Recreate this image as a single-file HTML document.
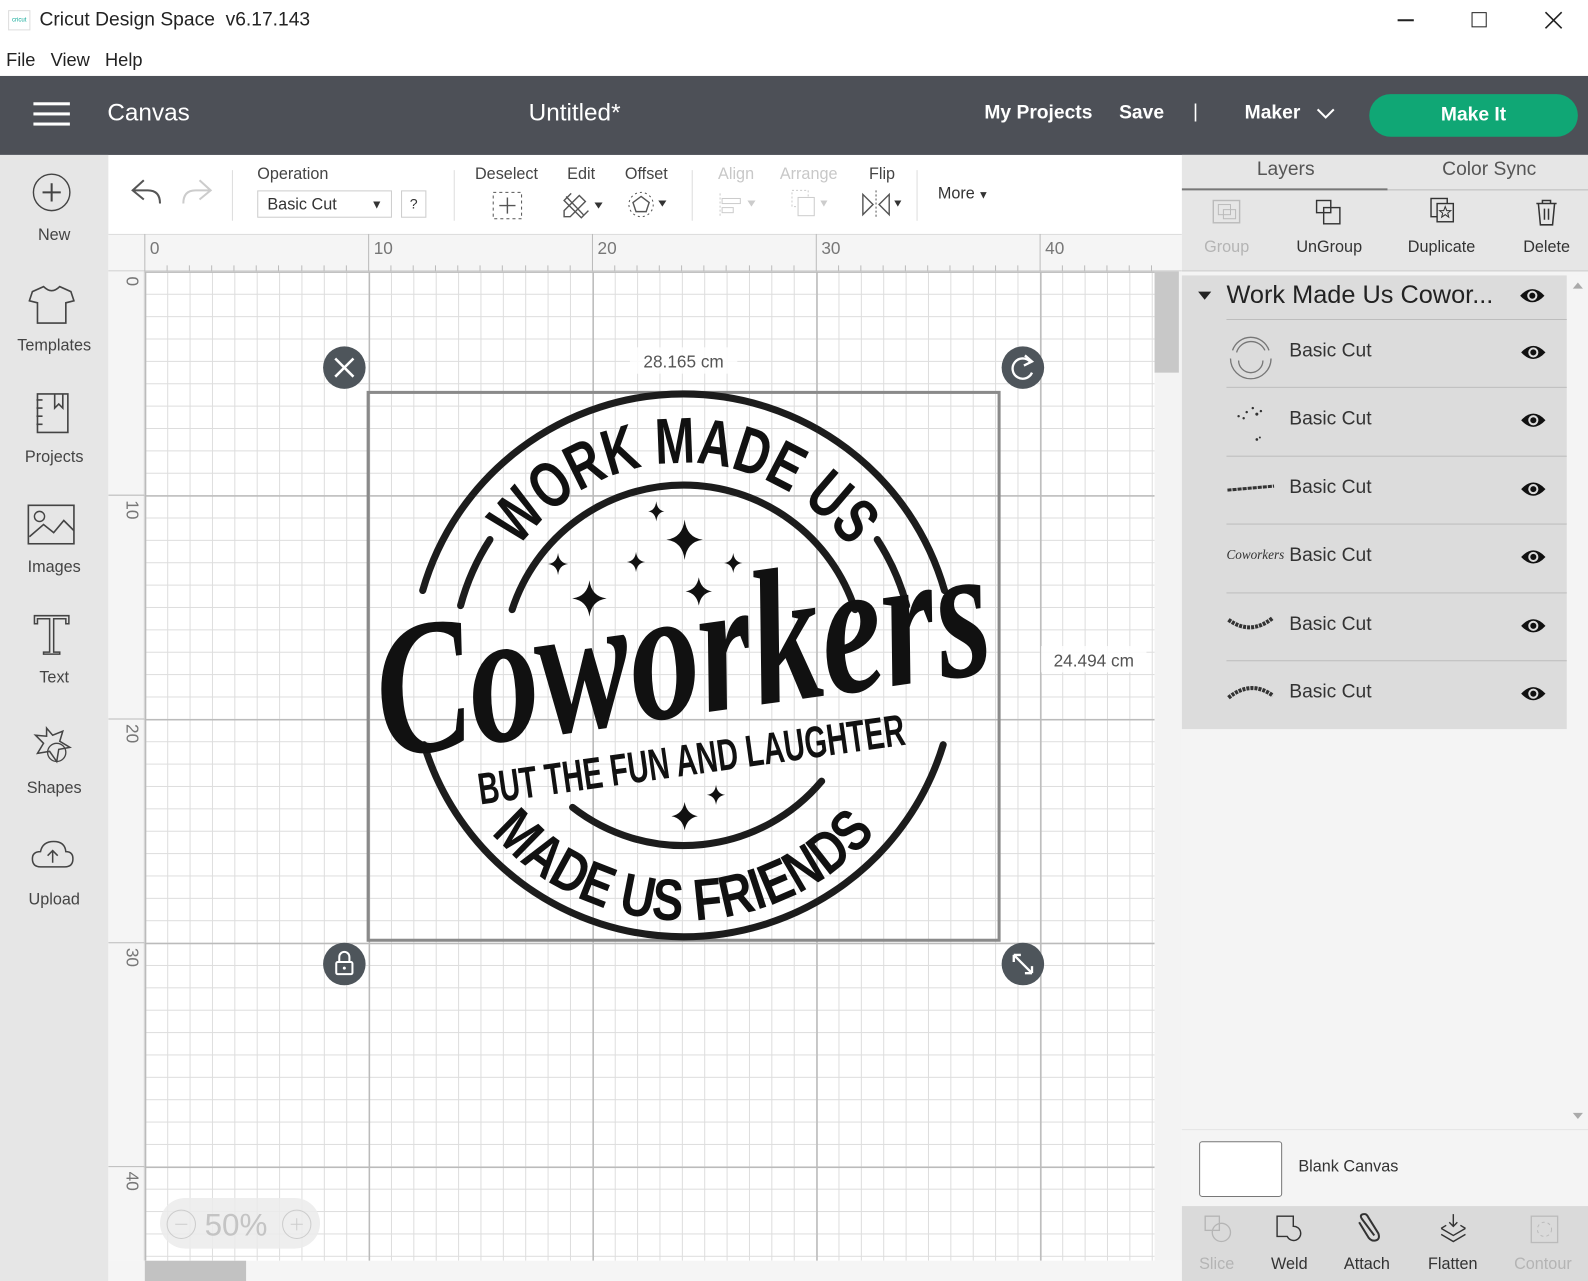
<!DOCTYPE html>
<html><head><meta charset="utf-8"><style>
*{margin:0;padding:0;box-sizing:border-box}
html,body{width:1588px;height:1281px;overflow:hidden;background:#fff}
#root{position:absolute;left:0;top:0;width:1568px;height:1265px;transform:scale(1.01276,1.01265);transform-origin:0 0;font-family:"Liberation Sans",sans-serif;color:#333}
.a{position:absolute}
.t{position:absolute;white-space:nowrap}
.side .lbl{position:absolute;width:107px;text-align:center;font-size:16px;color:#444;left:0}
.tb{font-size:16px;color:#444}
.rl{font-size:16px;color:#333}
.row{position:absolute;left:1211px;width:336px;height:67px;border-top:1px solid #bdbdbd}
.row span{position:absolute;left:62px;top:20px;font-size:19px;color:#333}
.eye{position:absolute;left:290px;top:22px}
</style></head><body><div id="root">

<div class="a" style="left:8px;top:10px;width:22px;height:20px;border:1px solid #ddd;font-size:6px;color:#1a9;text-align:center;line-height:18px">cricut</div>
<div class="t" style="left:39px;top:9px;font-size:19px;color:#222">Cricut Design Space&nbsp; v6.17.143</div>
<div class="a" style="left:1380px;top:19px;width:16px;height:1.5px;background:#222"></div>
<div class="a" style="left:1453px;top:12px;width:15px;height:15px;border:1.5px solid #222"></div>
<svg class="a" style="left:1525px;top:11px" width="18" height="18"><path d="M1 1L17 17M17 1L1 17" stroke="#222" stroke-width="1.6"/></svg>
<div class="t" style="left:6px;top:49px;font-size:18px;color:#222">File&nbsp;&nbsp; View&nbsp;&nbsp; Help</div>

<div class="a" style="left:0;top:75px;width:1568px;height:78px;background:#4d5057"></div>
<div class="a" style="left:33px;top:101px;width:36px;height:3px;background:#fff"></div>
<div class="a" style="left:33px;top:111px;width:36px;height:3px;background:#fff"></div>
<div class="a" style="left:33px;top:121px;width:36px;height:3px;background:#fff"></div>
<div class="t" style="left:106px;top:98px;font-size:24px;color:#fff">Canvas</div>
<div class="t" style="left:522px;top:98px;font-size:24px;color:#fff">Untitled*</div>
<div class="t" style="left:972px;top:101px;font-size:19px;color:#fff;font-weight:bold">My Projects</div>
<div class="t" style="left:1105px;top:101px;font-size:19px;color:#fff;font-weight:bold">Save</div>
<div class="t" style="left:1178px;top:100px;font-size:19px;color:#fff">|</div>
<div class="t" style="left:1229px;top:101px;font-size:19px;color:#fff;font-weight:bold">Maker</div>
<svg class="a" style="left:1299px;top:106px" width="20" height="12"><path d="M2 2L10 10L18 2" stroke="#fff" stroke-width="2" fill="none"/></svg>
<div class="a" style="left:1352px;top:93px;width:206px;height:42px;border-radius:21px;background:#10a775;color:#fff;font-size:19px;font-weight:bold;text-align:center;line-height:42px">Make It</div>

<div class="a side" style="left:0;top:153px;width:107px;height:1112px;background:#e6e6e6">
<svg class="a" style="left:32px;top:18px" width="38" height="38"><circle cx="19" cy="19" r="18" fill="none" stroke="#444" stroke-width="1.4"/><path d="M19 10V28M10 19H28" stroke="#444" stroke-width="2"/></svg>
<div class="lbl" style="top:71px">New</div>
<svg class="a" style="left:28px;top:128px" width="46" height="40"><path d="M15 2L4 7L1 16L9 18V38H37V18L45 16L42 7L31 2Q23 10 15 2Z" fill="none" stroke="#444" stroke-width="1.6"/></svg>
<div class="lbl" style="top:180px">Templates</div>
<svg class="a" style="left:32px;top:234px" width="40" height="42"><path d="M5 2H35V40H5Z M4 8H10M4 16H10M4 24H10M4 32H10M22 2V16L26 12L30 16V2" fill="none" stroke="#444" stroke-width="1.6"/></svg>
<div class="lbl" style="top:290px">Projects</div>
<svg class="a" style="left:27px;top:345px" width="48" height="40"><rect x="1" y="1" width="45" height="38" fill="none" stroke="#444" stroke-width="1.6"/><circle cx="12" cy="12" r="5" fill="none" stroke="#444" stroke-width="1.4"/><path d="M2 32L16 20L26 28L36 16L46 26" fill="none" stroke="#444" stroke-width="1.6"/></svg>
<div class="lbl" style="top:399px">Images</div>
<svg class="a" style="left:32px;top:453px" width="38" height="42"><path d="M2 2H36V10H33V5H21V38H27V40H11V38H17V5H5V10H2Z" fill="none" stroke="#444" stroke-width="1.5"/></svg>
<div class="lbl" style="top:508px">Text</div>
<svg class="a" style="left:32px;top:563px" width="40" height="40"><path d="M14 3L20 10L30 6L27 16L37 22L26 24L24 36L17 26L5 28L11 18L3 10L14 11Z" fill="none" stroke="#444" stroke-width="1.5"/><circle cx="24" cy="27" r="9" fill="none" stroke="#444" stroke-width="1.3"/></svg>
<div class="lbl" style="top:617px">Shapes</div>
<svg class="a" style="left:30px;top:675px" width="44" height="32"><path d="M10 28Q2 28 2 20Q2 13 10 13Q12 3 23 3Q34 3 35 13Q42 13 42 20Q42 28 34 28Z" fill="none" stroke="#444" stroke-width="1.5"/><path d="M22 24V12M17 17L22 12L27 17" fill="none" stroke="#444" stroke-width="1.5"/></svg>
<div class="lbl" style="top:727px">Upload</div>
</div>

<svg class="a" style="left:128px;top:175px" width="34" height="28"><path d="M14 3L3 13L14 22M3 13H18Q30 13 30 26" fill="none" stroke="#555" stroke-width="2"/></svg>
<svg class="a" style="left:177px;top:175px" width="34" height="28"><path d="M20 3L31 13L20 22M31 13H16Q4 13 4 26" fill="none" stroke="#ccc" stroke-width="2"/></svg>
<div class="a" style="left:229px;top:168px;width:1px;height:50px;background:#ddd"></div>
<div class="t tb" style="left:254px;top:164px">Operation</div>
<div class="a" style="left:254px;top:188px;width:133px;height:27px;border:1px solid #ccc;font-size:16px;color:#333;padding:5px 0 0 9px">Basic Cut<span style="position:absolute;right:8px;top:6px;font-size:12px">▼</span></div>
<div class="a" style="left:396px;top:188px;width:25px;height:27px;border:1px solid #ccc;font-size:14px;text-align:center;line-height:25px">?</div>
<div class="a" style="left:448px;top:168px;width:1px;height:50px;background:#ddd"></div>
<div class="t tb" style="left:469px;top:164px">Deselect</div>
<svg class="a" style="left:486px;top:189px" width="30" height="28"><rect x="1" y="1" width="28" height="26" fill="none" stroke="#555" stroke-dasharray="3 3"/><path d="M15 6V22M7 14H23" stroke="#555" stroke-width="1.4"/></svg>
<div class="t tb" style="left:560px;top:164px">Edit</div>
<svg class="a" style="left:554px;top:188px" width="44" height="28"><path d="M3 20L18 5L24 11L9 26H3Z M5 6L22 24M10 3L3 10L20 27L27 20" fill="none" stroke="#555" stroke-width="1.4"/><path d="M33 12L41 12L37 18Z" fill="#333"/></svg>
<div class="t tb" style="left:617px;top:164px">Offset</div>
<svg class="a" style="left:619px;top:188px" width="42" height="28"><path d="M14 6L22 12L19 21H9L6 12Z" fill="none" stroke="#555" stroke-width="1.4"/><circle cx="14" cy="14" r="12" fill="none" stroke="#555" stroke-dasharray="2 3"/><path d="M31 10L39 10L35 16Z" fill="#333"/></svg>
<div class="a" style="left:683px;top:168px;width:1px;height:50px;background:#ddd"></div>
<div class="t tb" style="left:709px;top:164px;color:#c8c8c8">Align</div>
<svg class="a" style="left:708px;top:188px" width="42" height="28"><path d="M3 3V26" stroke="#ccc" stroke-dasharray="2 2"/><rect x="5" y="8" width="18" height="5" fill="none" stroke="#ccc"/><rect x="5" y="17" width="11" height="5" fill="none" stroke="#ccc"/><path d="M30 10L38 10L34 16Z" fill="#ccc"/></svg>
<div class="t tb" style="left:770px;top:164px;color:#c8c8c8">Arrange</div>
<svg class="a" style="left:779px;top:185px" width="42" height="32"><rect x="3" y="3" width="16" height="16" fill="none" stroke="#ccc" stroke-dasharray="2 2"/><rect x="9" y="10" width="16" height="18" fill="#fff" stroke="#ccc"/><path d="M31 13L38 13L34.5 19Z" fill="#ccc"/></svg>
<div class="t tb" style="left:858px;top:164px">Flip</div>
<svg class="a" style="left:849px;top:186px" width="44" height="32"><path d="M3 6V26L13 16Z M29 6V26L19 16Z" fill="none" stroke="#555" stroke-width="1.4"/><path d="M16 2V30" stroke="#555" stroke-dasharray="2 2"/><path d="M34 12L41 12L37.5 18Z" fill="#333"/></svg>
<div class="a" style="left:905px;top:168px;width:1px;height:50px;background:#ddd"></div>
<div class="t tb" style="left:926px;top:183px;color:#333">More<span style="font-size:11px"> ▼</span></div>

<div class="a" style="left:107px;top:231px;width:1060px;height:37px;background:#f5f5f5;border-top:1px solid #ddd;border-bottom:1px solid #ccc"></div>
<div class="a" style="left:107px;top:268px;width:36px;height:977px;background:#f5f5f5;border-right:1px solid #ccc"></div>
<svg class="a" style="left:107px;top:231px" width="1040" height="1014">
<g stroke="#bbb" stroke-width="1">
<path d="M36 37V0M257 37V0M478 37V0M699 37V0M920 37V0"/>
<path d="M58 37v-6M80 37v-6M102 37v-6M124 37v-6M146 37v-6M168 37v-6M191 37v-6M213 37v-6M235 37v-6M279 37v-6M301 37v-6M323 37v-6M345 37v-6M367 37v-6M389 37v-6M412 37v-6M434 37v-6M456 37v-6M500 37v-6M522 37v-6M544 37v-6M566 37v-6M588 37v-6M610 37v-6M633 37v-6M655 37v-6M677 37v-6M721 37v-6M743 37v-6M765 37v-6M787 37v-6M809 37v-6M831 37v-6M854 37v-6M876 37v-6M898 37v-6M942 37v-6M964 37v-6M986 37v-6M1008 37v-6M1030 37v-6"/>
<path d="M0 258H36M0 479H36M0 700H36M0 921H36"/>
</g>
<g fill="#777" font-size="17" font-family="Liberation Sans">
<text x="41" y="20">0</text><text x="262" y="20">10</text><text x="483" y="20">20</text><text x="704" y="20">30</text><text x="925" y="20">40</text>
<text transform="translate(18,42) rotate(90)">0</text>
<text transform="translate(18,263) rotate(90)">10</text>
<text transform="translate(18,484) rotate(90)">20</text>
<text transform="translate(18,705) rotate(90)">30</text>
<text transform="translate(18,926) rotate(90)">40</text>
</g>
</svg>

<div class="a" style="left:143px;top:268px;width:997px;height:977px;background-color:#fff;
background-image:linear-gradient(90deg,#bbb 1.5px,transparent 1.5px),linear-gradient(180deg,#bbb 1.5px,transparent 1.5px),linear-gradient(90deg,#ddd 1px,transparent 1px),linear-gradient(180deg,#ddd 1px,transparent 1px);
background-size:221px 221px,221px 221px,22.1px 22.1px,22.1px 22.1px;background-position:0 0,0 0,0 0,0 0"></div>
<div class="a" style="left:1140px;top:268px;width:27px;height:977px;background:#f3f3f3"></div>
<div class="a" style="left:1140px;top:268px;width:24px;height:100px;background:#c8c8c8"></div>
<div class="a" style="left:107px;top:1245px;width:1060px;height:20px;background:#f5f5f5"></div>
<div class="a" style="left:143px;top:1245px;width:100px;height:20px;background:#c2c2c2"></div>

<div class="a" style="left:158px;top:1183px;width:158px;height:50px;border-radius:25px;background:rgba(235,235,235,.85)"></div>
<svg class="a" style="left:163px;top:1193px" width="150" height="32"><circle cx="16" cy="16" r="14" fill="none" stroke="#ccc"/><path d="M10 16H22" stroke="#ccc"/><circle cx="130" cy="16" r="14" fill="none" stroke="#ccc"/><path d="M124 16H136M130 10V22" stroke="#ccc"/><text x="39" y="27" font-size="31" fill="#c4c4c4" font-family="Liberation Sans">50%</text></svg>

<svg class="a" style="left:0;top:0" width="1168" height="1265">
<rect x="363.5" y="387.5" width="623" height="541" fill="none" stroke="#8a8a8a" stroke-width="3"/>
<g fill="none" stroke="#1c1c1c" stroke-width="7" stroke-linecap="round">
<path d="M417.4 583.1A268 268 0 0 1 932.6 583.1"/>
<path d="M418.7 735.4A268 268 0 0 0 931.3 735.4"/>
<path d="M454.8 598A228 228 0 0 1 483.8 532.8"/>
<path d="M866.2 532.8A228 228 0 0 1 895.2 598"/>
<path d="M505.7 602A178 178 0 0 1 844.3 602"/>
<path d="M565.4 797.3A178 178 0 0 0 811.3 771.4"/>
</g>
<defs>
<path id="tp" d="M487.1 588.6A200 200 0 0 1 862.9 588.6"/>
<path id="bp" d="M438.2 743.2A252 252 0 0 0 911.8 743.2"/>
</defs>
<g fill="#111" font-family="Liberation Sans Narrow,Liberation Sans,sans-serif" font-weight="bold">
<text font-size="64" text-anchor="middle"><textPath href="#tp" startOffset="50%" textLength="380" lengthAdjust="spacingAndGlyphs">WORK MADE US</textPath></text>
<text font-size="58" text-anchor="middle"><textPath href="#bp" startOffset="50%" textLength="430" lengthAdjust="spacingAndGlyphs">MADE US FRIENDS</textPath></text>
<text x="683" y="765" font-size="44" text-anchor="middle" textLength="425" lengthAdjust="spacingAndGlyphs" transform="rotate(-8 683 752)">BUT THE FUN AND LAUGHTER</text>
</g>
<text x="675" y="706" font-family="Liberation Serif,serif" font-style="italic" font-weight="bold" font-size="190" fill="#111" text-anchor="middle" textLength="610" lengthAdjust="spacingAndGlyphs" transform="rotate(-8 675 655)">Coworkers</text>
<g fill="#111">
<path d="M648 495Q649 504 656 505Q649 506 648 515Q647 506 640 505Q647 504 648 495Z"/>
<path d="M676 513Q678 531 694 533Q678 535 676 553Q674 535 658 533Q674 531 676 513Z"/>
<path d="M551 546Q552 556 561 557Q552 558 551 568Q550 558 541 557Q550 556 551 546Z"/>
<path d="M628 545Q629 554 637 555Q629 556 628 565Q627 556 619 555Q627 554 628 545Z"/>
<path d="M724 546Q725 555 733 556Q725 557 724 566Q723 557 715 556Q723 555 724 546Z"/>
<path d="M690 570Q692 582 703 584Q692 586 690 598Q688 586 677 584Q688 582 690 570Z"/>
<path d="M582 573Q584 589 599 591Q584 593 582 609Q580 593 565 591Q580 589 582 573Z"/>
<path d="M707 775Q708 784 716 785Q708 786 707 795Q706 786 698 785Q706 784 707 775Z"/>
<path d="M676 792Q678 804 689 806Q678 808 676 820Q674 808 663 806Q674 804 676 792Z"/>
</g>
<rect x="622" y="343" width="106" height="26" fill="#fff" opacity=".85"/>
<text x="675" y="363" font-size="17" fill="#555" text-anchor="middle" font-family="Liberation Sans">28.165 cm</text>
<rect x="1028" y="638" width="104" height="26" fill="#fff" opacity=".85"/>
<text x="1080" y="658" font-size="17" fill="#555" text-anchor="middle" font-family="Liberation Sans">24.494 cm</text>
<g fill="#4e555b">
<circle cx="340" cy="363" r="21"/><circle cx="1010" cy="363" r="21"/><circle cx="340" cy="952" r="21"/><circle cx="1010" cy="952" r="21"/>
</g>
<path d="M331 354L349 372M349 354L331 372" stroke="#fff" stroke-width="2.5"/>
<path d="M1017 357A10 10 0 1 0 1019 368" fill="none" stroke="#fff" stroke-width="2.3"/><path d="M1012 351L1019 357L1011 361" fill="none" stroke="#fff" stroke-width="2.3"/>
<rect x="332" y="950" width="16" height="12" rx="1.5" fill="none" stroke="#fff" stroke-width="2"/><path d="M335 950V945A5 5 0 0 1 345 945V950" fill="none" stroke="#fff" stroke-width="2"/><circle cx="340" cy="956" r="1.5" fill="#fff"/>
<path d="M1001 943L1019 961M1001 943H1008M1001 943V950M1019 961H1012M1019 961V954" fill="none" stroke="#fff" stroke-width="2.3"/>
</svg>

<div class="a" style="left:1167px;top:153px;width:401px;height:1112px;background:#f4f4f4"></div>
<div class="a" style="left:1167px;top:153px;width:401px;height:115px;background:#e6e6e6;border-bottom:1px solid #ccc"></div>
<div class="t" style="left:1241px;top:157px;font-size:19px;color:#555">Layers</div>
<div class="t" style="left:1424px;top:157px;font-size:19px;color:#555">Color Sync</div>
<div class="a" style="left:1167px;top:186px;width:203px;height:2px;background:#777"></div>
<div class="a" style="left:1370px;top:187px;width:198px;height:1px;background:#bbb"></div>
<svg class="a" style="left:1196px;top:196px" width="32" height="28"><rect x="2" y="2" width="26" height="22" fill="none" stroke="#bbb" stroke-width="1.4"/><rect x="7" y="6" width="12" height="10" fill="none" stroke="#bbb"/><rect x="12" y="11" width="12" height="9" fill="none" stroke="#bbb"/></svg>
<div class="t rl" style="left:1189px;top:236px;color:#b4b4b4">Group</div>
<svg class="a" style="left:1298px;top:196px" width="30" height="30"><rect x="2" y="2" width="14" height="12" fill="none" stroke="#333" stroke-width="1.4"/><rect x="9" y="9" width="16" height="16" fill="none" stroke="#333" stroke-width="1.4"/></svg>
<div class="t rl" style="left:1280px;top:236px">UnGroup</div>
<svg class="a" style="left:1411px;top:194px" width="28" height="30"><rect x="2" y="2" width="16" height="18" fill="none" stroke="#333" stroke-width="1.4"/><rect x="8" y="7" width="16" height="18" fill="#e6e6e6" stroke="#333" stroke-width="1.4"/><path d="M16 10L17.5 14H21.5L18.5 16.5L19.5 20.5L16 18L12.5 20.5L13.5 16.5L10.5 14H14.5Z" fill="none" stroke="#333"/></svg>
<div class="t rl" style="left:1390px;top:236px">Duplicate</div>
<svg class="a" style="left:1515px;top:196px" width="24" height="28"><path d="M2 5H22M8 5V2H16V5M4 5L6 26H18L20 5M10 10V21M14 10V21" fill="none" stroke="#333" stroke-width="1.5"/></svg>
<div class="t rl" style="left:1504px;top:236px">Delete</div>

<div class="a" style="left:1167px;top:272px;width:380px;height:448px;background:#dcdcdc"></div>
<svg class="a" style="left:1182px;top:287px" width="16" height="10"><path d="M1 1H14L7.5 9Z" fill="#222"/></svg>
<div class="t" style="left:1211px;top:277px;font-size:25px;color:#222">Work Made Us Cowor...</div>
<svg class="a" style="left:1500px;top:282px" width="26" height="20"><path d="M1 10Q13 -3 25 10Q13 23 1 10Z" fill="#111"/><circle cx="13" cy="10" r="5" fill="#dcdcdc"/><circle cx="13" cy="10" r="3" fill="#111"/></svg>

<div class="row" style="top:315px"><span>Basic Cut</span><svg class="eye" width="26" height="20"><path d="M1 10Q13 -3 25 10Q13 23 1 10Z" fill="#111"/><circle cx="13" cy="10" r="5" fill="#dcdcdc"/><circle cx="13" cy="10" r="3" fill="#111"/></svg>
<svg class="a" style="left:0;top:8px" width="48" height="52"><g fill="none" stroke="#777" stroke-width="1.3"><path d="M6 22A19 19 0 0 1 42 22"/><path d="M10 24A15 15 0 0 1 38 22"/><path d="M4 30A20 20 0 0 0 44 30"/><path d="M12 32A12 12 0 0 0 36 32"/></g></svg></div>
<div class="row" style="top:382px"><span>Basic Cut</span><svg class="eye" width="26" height="20"><path d="M1 10Q13 -3 25 10Q13 23 1 10Z" fill="#111"/><circle cx="13" cy="10" r="5" fill="#dcdcdc"/><circle cx="13" cy="10" r="3" fill="#111"/></svg>
<svg class="a" style="left:6px;top:8px" width="40" height="50"><g fill="#333"><circle cx="6" cy="20" r="1.2"/><circle cx="14" cy="16" r="1.2"/><circle cx="20" cy="12" r="1.2"/><circle cx="24" cy="18" r="1.5"/><circle cx="28" cy="15" r="1.2"/><circle cx="11" cy="22" r="1.2"/><circle cx="24" cy="43" r="1.3"/><circle cx="27" cy="41" r="1"/></g></svg></div>
<div class="row" style="top:450px"><span>Basic Cut</span><svg class="eye" width="26" height="20"><path d="M1 10Q13 -3 25 10Q13 23 1 10Z" fill="#111"/><circle cx="13" cy="10" r="5" fill="#dcdcdc"/><circle cx="13" cy="10" r="3" fill="#111"/></svg>
<svg class="a" style="left:0;top:26px" width="48" height="12"><path d="M1 7L47 3" stroke="#333" stroke-width="3" stroke-dasharray="4 1"/></svg></div>
<div class="row" style="top:517px"><span>Basic Cut</span><svg class="eye" width="26" height="20"><path d="M1 10Q13 -3 25 10Q13 23 1 10Z" fill="#111"/><circle cx="13" cy="10" r="5" fill="#dcdcdc"/><circle cx="13" cy="10" r="3" fill="#111"/></svg>
<div class="t" style="left:0;top:22px;font-family:'Liberation Serif',serif;font-style:italic;font-size:13px;color:#333">Coworkers</div></div>
<div class="row" style="top:585px"><span>Basic Cut</span><svg class="eye" width="26" height="20"><path d="M1 10Q13 -3 25 10Q13 23 1 10Z" fill="#111"/><circle cx="13" cy="10" r="5" fill="#dcdcdc"/><circle cx="13" cy="10" r="3" fill="#111"/></svg>
<svg class="a" style="left:0;top:20px" width="48" height="20"><path d="M2 6Q24 22 46 4" fill="none" stroke="#333" stroke-width="4" stroke-dasharray="3 1"/></svg></div>
<div class="row" style="top:652px;height:68px"><span>Basic Cut</span><svg class="eye" width="26" height="20"><path d="M1 10Q13 -3 25 10Q13 23 1 10Z" fill="#111"/><circle cx="13" cy="10" r="5" fill="#dcdcdc"/><circle cx="13" cy="10" r="3" fill="#111"/></svg>
<svg class="a" style="left:0;top:20px" width="48" height="20"><path d="M2 16Q24 -2 46 14" fill="none" stroke="#333" stroke-width="4" stroke-dasharray="3 1"/></svg></div>

<svg class="a" style="left:1552px;top:278px" width="12" height="8"><path d="M1 7L6 1L11 7Z" fill="#aaa"/></svg>
<svg class="a" style="left:1552px;top:1098px" width="12" height="8"><path d="M1 1L6 7L11 1Z" fill="#aaa"/></svg>
<div class="a" style="left:1167px;top:1115px;width:401px;height:1px;background:#e4e4e4"></div>
<div class="a" style="left:1184px;top:1127px;width:82px;height:55px;background:#fff;border:1px solid #777;border-radius:3px"></div>
<div class="t" style="left:1282px;top:1144px;font-size:16px;color:#333">Blank Canvas</div>

<div class="a" style="left:1167px;top:1191px;width:401px;height:74px;background:#dadada"></div>
<svg class="a" style="left:1188px;top:1199px" width="30" height="30"><rect x="2" y="2" width="14" height="14" fill="none" stroke="#b5b5b5" stroke-width="1.3"/><circle cx="18" cy="18" r="9" fill="none" stroke="#b5b5b5" stroke-width="1.3"/></svg>
<div class="t rl" style="left:1184px;top:1240px;color:#b4b4b4">Slice</div>
<svg class="a" style="left:1259px;top:1199px" width="30" height="30"><path d="M2 2H18V12A7 7 0 1 1 12 22H2Z" fill="none" stroke="#333" stroke-width="1.4"/></svg>
<div class="t rl" style="left:1255px;top:1240px">Weld</div>
<svg class="a" style="left:1337px;top:1198px" width="28" height="32"><path d="M20 22L8 6Q5 2 9 1Q12 0 14 4L24 20Q26 26 21 27Q16 28 13 22L5 9" fill="none" stroke="#333" stroke-width="2"/></svg>
<div class="t rl" style="left:1327px;top:1240px">Attach</div>
<svg class="a" style="left:1420px;top:1198px" width="30" height="30"><path d="M15 1V13M11 9L15 13L19 9M3 15L15 22L27 15M8 12L3 15M22 12L27 15M3 21L15 28L27 21" fill="none" stroke="#333" stroke-width="1.4"/></svg>
<div class="t rl" style="left:1410px;top:1240px">Flatten</div>
<svg class="a" style="left:1510px;top:1199px" width="30" height="30"><rect x="2" y="2" width="26" height="26" fill="none" stroke="#bbb" stroke-width="1.3"/><circle cx="15" cy="15" r="7" fill="none" stroke="#bbb" stroke-dasharray="3 3"/></svg>
<div class="t rl" style="left:1495px;top:1240px;color:#b4b4b4">Contour</div>

</div></body></html>
